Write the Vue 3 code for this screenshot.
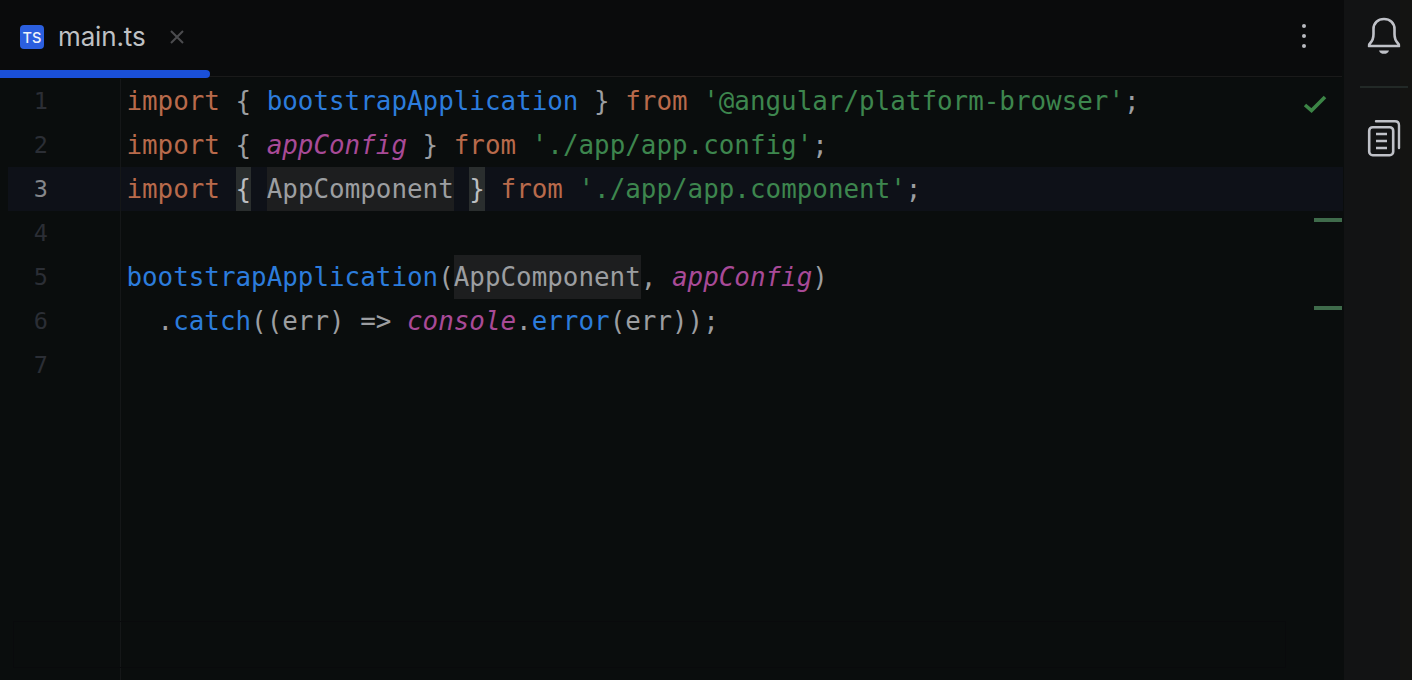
<script setup>
const lines = [
  { n: 1, parts: [['kw','import'],['p',' { '],['fn','bootstrapApplication'],['p',' } '],['kw','from'],['p',' '],['str',"'@angular/platform-browser'"],['p',';']] },
  { n: 2, parts: [['kw','import'],['p',' { '],['it','appConfig'],['p',' } '],['kw','from'],['p',' '],['str',"'./app/app.config'"],['p',';']] },
  { n: 3, current: true, parts: [['kw','import'],['p',' '],['br','{'],['p',' '],['hl','AppComponent'],['p',' '],['br','}'],['p',' '],['kw','from'],['p',' '],['str',"'./app/app.component'"],['p',';']] },
  { n: 4, parts: [] },
  { n: 5, parts: [['fn','bootstrapApplication'],['p','('],['hl','AppComponent'],['p',', '],['it','appConfig'],['p',')']] },
  { n: 6, parts: [['p','  .'],['fn','catch'],['p','((err) => '],['it','console'],['p','.'],['fn','error'],['p','(err));']] },
  { n: 7, parts: [] },
]
</script>

<template>
  <div class="ide">
    <main class="main">
      <header class="tabs">
        <div class="tab">
          <span class="ts">TS</span>
          <span class="name">main.ts</span>
          <svg class="close" width="16" height="16" viewBox="0 0 16 16"><path d="M2 2 14 14M14 2 2 14" stroke="#4b4c4f" stroke-width="2" fill="none"/></svg>
        </div>
        <svg class="kebab" width="6" height="26" viewBox="0 0 6 26"><circle cx="3" cy="3" r="2"/><circle cx="3" cy="13" r="2"/><circle cx="3" cy="23" r="2"/></svg>
      </header>
      <div class="rule"><span class="active"></span></div>
      <section class="editor">
        <div v-for="l in lines" :key="l.n" class="line" :class="{ current: l.current }">
          <div class="num">{{ l.n }}</div>
          <div class="code"><span v-for="(p, i) in l.parts" :key="i" :class="p[0]">{{ p[1] }}</span></div>
        </div>
        <div class="filler"><div class="num"></div></div>
        <svg class="check" width="24" height="18" viewBox="0 0 24 18"><path d="M2 10 8.5 15.5 22 2" stroke="#3c8546" stroke-width="3.6" fill="none"/></svg>
        <span class="mark m1"></span>
        <span class="mark m2"></span>
        <span class="ghost"></span>
      </section>
    </main>
    <aside class="side">
      <svg class="bell" width="36" height="40" viewBox="0 0 36 40">
        <path d="M3 30C2.6 28.8 3.4 27.9 4.3 27 6.6 24.6 7.5 22 7.5 18V13C7.5 7 12 3 18 3S28.5 7 28.5 13V18C28.5 22 29.4 24.6 31.7 27 32.6 27.9 33.4 28.8 33 30Z" fill="none" stroke="#bfc1c8" stroke-width="2.6" stroke-linejoin="round"/>
        <path d="M13 34.5H23C22.4 37 20.5 37.8 18 37.8S13.6 37 13 34.5Z" fill="#bfc1c8"/>
      </svg>
      <div class="divider"></div>
      <svg class="docs" width="34" height="38" viewBox="0 0 34 38">
        <path d="M9 2.2H28C30.5 2.2 32 3.7 32 6.2V29" fill="none" stroke="#bfc1c8" stroke-width="2.4" stroke-linecap="round"/>
        <rect x="2.2" y="8.2" width="24" height="28" rx="3.5" fill="none" stroke="#bfc1c8" stroke-width="2.6"/>
        <path d="M9 15H20M9 22H20M9 29H20" stroke="#bfc1c8" stroke-width="2.4" fill="none"/>
      </svg>
    </aside>
  </div>
</template>

<style scoped>
.ide { display: flex; width: 1412px; height: 680px; overflow: hidden; background: #0a0d0d; }
.main { width: 1344px; display: flex; flex-direction: column; flex: none; }
.tabs { height: 70px; display: flex; align-items: center; justify-content: space-between; padding: 3px 37px 0 20px; box-sizing: border-box; background: #0a0b0c; }
.tab { display: flex; align-items: center; }
.ts { width: 24px; height: 24px; border-radius: 4px; background: #2b5fdf; color: #eef2fb; font: 500 14.5px/26px "Inter", sans-serif; text-align: center; }
.name { margin-left: 14px; font: 400 26px/32px "Inter", sans-serif; color: #bfc1c4; letter-spacing: -.15px; }
.close { margin-left: 24px; }
.kebab { fill: #b8bac0; margin-top: -2px; }
.rule { height: 8px; position: relative; background: linear-gradient(#0a0b0c 6px, #1a1a1a 6px, #1a1a1a 7px, #0a0c0c 7px); margin-right: 2px; }
.active { position: absolute; left: 0; top: 0; width: 210px; height: 8px; background: #1a50d8; border-radius: 0 4px 4px 0; }
.editor { position: relative; flex: 1; display: flex; flex-direction: column; padding-top: 1px; min-height: 0; }
.line { display: flex; height: 44px; flex: none; }
.num { width: 121px; box-sizing: border-box; padding-right: 72px; text-align: right; border-right: 1px solid #151718; color: #2b2e35; font: 400 23.5px/44px "DejaVu Sans Mono", monospace; flex: none; }
.current { margin-left: 8px; background: #0e1118; margin-right: 1px; }
.current .num { width: 113px; color: #85878b; }
.code { padding-left: 5.4px; white-space: pre; font: 400 25.9px/44px "DejaVu Sans Mono", monospace; color: #9c9ea1; }
.kw { color: #b86a4b; }
.fn { color: #2c7cdc; }
.str { color: #3d864e; }
.it { color: #a84a97; font-style: italic; }
.hl { background: #1d1e1f; display: inline-block; color: #9c9ea1; }
.br { background: #2a2e2e; display: inline-block; color: #bcbec0; }
.filler { flex: 1; display: flex; }
.filler .num { height: 100%; }
.check { position: absolute; left: 1303px; top: 17px; }
.mark { position: absolute; left: 1314px; width: 28px; height: 4px; background: #3f6b4b; }
.m1 { top: 140px; }
.m2 { top: 228px; }
.ghost { position: absolute; left: 13px; top: 543px; width: 1271px; height: 45px; border: 1px solid #090a0c; pointer-events: none; }
.side { flex: 1; display: flex; flex-direction: column; align-items: flex-start; background: linear-gradient(90deg, #121314 56px, #141412 56px); box-sizing: border-box; padding: 16px 0 0 22px; }
.bell { display: block; }
.divider { width: 48px; height: 2px; background: #222927; margin: 30px 0 0 -6px; }
.docs { margin: 31px 0 0 1px; display: block; }
</style>

<style>
html, body { margin: 0; background: #0a0d0d; overflow: hidden; }
</style>
